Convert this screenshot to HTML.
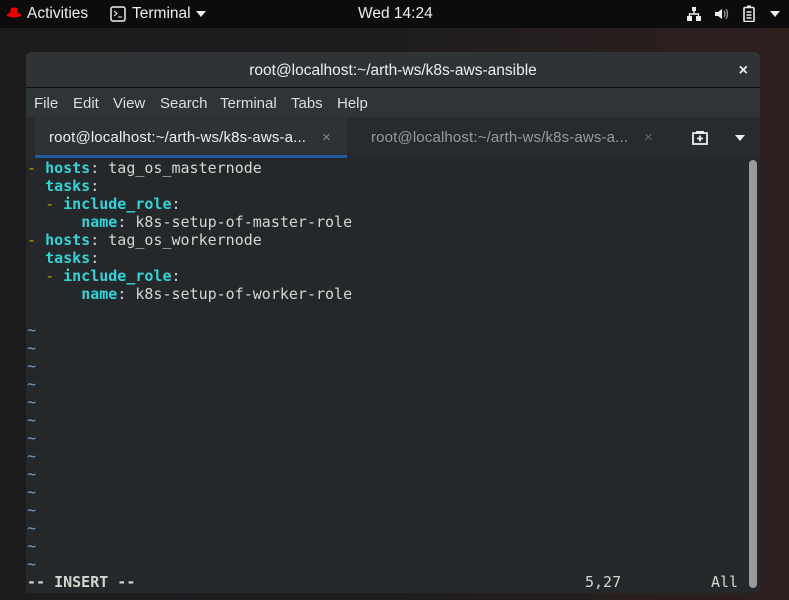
<!DOCTYPE html>
<html><head><meta charset="utf-8"><style>
*{margin:0;padding:0;box-sizing:border-box}
html,body{width:789px;height:600px;overflow:hidden}
body{background:linear-gradient(90deg,#1c1c1d 0%,#1e1d1e 50%,#2a1e1e 85%,#2e1f1f 100%);font-family:"Liberation Sans","DejaVu Sans",sans-serif;position:relative}
#top{position:absolute;left:0;top:0;width:789px;height:28px;background:#0c0c0c;color:#eee;font-size:15.5px}
#top span{position:absolute;top:5px}
#win{position:absolute;left:26px;top:52px;width:734px;height:541px;background:#2e3235;border-radius:6px 6px 0 0;overflow:hidden}
#title{height:36px;border-bottom:1px solid #111;text-align:center;color:#eee;font-size:15.5px;line-height:38px;background:#2f3336}
#menu{height:29px;background:#2f3437;color:#ddd;font-size:15px;line-height:31px;position:relative}
#menu span{position:absolute;top:0}
#tabs{height:41px;background:#272b2e;position:relative;font-size:15px;letter-spacing:0.15px}
.tab{position:absolute;top:0;height:41px;line-height:41px;color:#eee}
#term{position:absolute;left:0;top:106px;width:734px;height:435px;background:#24282b;font-family:"DejaVu Sans Mono","Liberation Mono",monospace;font-size:15px;color:#d3d7cf}
.l{position:absolute;left:1px;height:18px;line-height:18px;white-space:pre}
.c{color:#34d3d6;font-weight:bold}.y{color:#c4a000}.t{color:#729fcf}
</style></head><body>
<div id="top">
<svg style="position:absolute;left:6px;top:7px" width="16" height="12" viewBox="0 0 16 12"><path d="M4 6 L5 1 Q8 0 11 1 L12 6 Q16 7 15 9 Q8 12 1 9 Q0 7 4 6Z" fill="#e00"/></svg>
<span style="left:27px">Activities</span>
<svg style="position:absolute;left:110px;top:6px" width="16" height="16"><rect x="1" y="1" width="14" height="14" rx="2" fill="none" stroke="#eee" stroke-width="1.5"/><path d="M4 5l3 2.5-3 2.5M8 11h4" stroke="#eee" fill="none"/></svg>
<span style="left:132px">Terminal</span>
<svg style="position:absolute;left:196px;top:11px" width="10" height="6"><path d="M0 0h10L5 6z" fill="#eee"/></svg>
<span style="left:358px">Wed 14:24</span>
<svg style="position:absolute;left:686px;top:6px" width="16" height="16"><rect x="6" y="1" width="4" height="4" fill="#eee"/><rect x="1" y="10" width="5" height="5" fill="#eee"/><rect x="10" y="10" width="5" height="5" fill="#eee"/><path d="M8 5v3M3.5 10V8h9v2" stroke="#eee" fill="none" stroke-width="1.4"/></svg>
<svg style="position:absolute;left:714px;top:6px" width="16" height="16"><path d="M1 6h3l4-3v10l-4-3H1z" fill="#eee"/><path d="M10 5q2 3 0 6M12 3q3 5 0 10" stroke="#999" fill="none" stroke-width="1.3"/></svg>
<svg style="position:absolute;left:743px;top:5px" width="12" height="17"><rect x="4" y="0.5" width="4" height="2" fill="#eee"/><rect x="1" y="2.5" width="10" height="14" rx="1" fill="none" stroke="#eee" stroke-width="1.6"/><path d="M3.5 7h5M3.5 10h5M3.5 13h5" stroke="#eee" stroke-width="1.5"/></svg>
<svg style="position:absolute;left:770px;top:11px" width="10" height="6"><path d="M0 0h10L5 6z" fill="#eee"/></svg>
</div>
<div id="win">
<div id="title">root@localhost:~/arth-ws/k8s-aws-ansible<span style="position:absolute;right:12px;font-size:16px;font-weight:bold">×</span></div>
<div id="menu"><span style="left:8px">File</span><span style="left:47px">Edit</span><span style="left:87px">View</span><span style="left:134px">Search</span><span style="left:194px">Terminal</span><span style="left:265px">Tabs</span><span style="left:311px">Help</span></div>
<div id="tabs">
<div class="tab" style="left:9px;width:312px;background:#2e3235;border-bottom:3px solid #215d9c"><span style="position:absolute;left:14px">root@localhost:~/arth-ws/k8s-aws-a...</span><span style="position:absolute;left:287px;color:#888">×</span></div>
<div class="tab" style="left:321px;width:320px;color:#999"><span style="position:absolute;left:24px">root@localhost:~/arth-ws/k8s-aws-a...</span><span style="position:absolute;left:297px;color:#666">×</span></div>
<svg style="position:absolute;left:666px;top:13px" width="16" height="15"><rect x="1" y="3" width="14" height="11" fill="none" stroke="#eee" stroke-width="1.8"/><rect x="4" y="1" width="8" height="3" fill="#eee"/><path d="M8 5.5v6M5 8.5h6" stroke="#eee" stroke-width="1.8"/></svg>
<svg style="position:absolute;left:709px;top:18px" width="10" height="6"><path d="M0 0h10L5 6z" fill="#eee"/></svg>
</div>
<div id="term">
<div style="position:absolute;left:723px;top:2px;width:8px;height:428px;background:#9b9b9b;border-radius:4px"></div>
<div class="l" style="top:1px"><span class="y">-</span> <span class="c">hosts</span>: tag_os_masternode</div>
<div class="l" style="top:19px">  <span class="c">tasks</span>:</div>
<div class="l" style="top:37px">  <span class="y">-</span> <span class="c">include_role</span>:</div>
<div class="l" style="top:55px">      <span class="c">name</span>: k8s-setup-of-master-role</div>
<div class="l" style="top:73px"><span class="y">-</span> <span class="c">hosts</span>: tag_os_workernode</div>
<div class="l" style="top:91px">  <span class="c">tasks</span>:</div>
<div class="l" style="top:109px">  <span class="y">-</span> <span class="c">include_role</span>:</div>
<div class="l" style="top:127px">      <span class="c">name</span>: k8s-setup-of-worker-role</div>
<div class="l t" style="top:163px">~<br>~<br>~<br>~<br>~<br>~<br>~<br>~<br>~<br>~<br>~<br>~<br>~<br>~</div>
<div class="l" style="top:415px;font-weight:bold">-- INSERT --</div>
<div class="l" style="top:415px;left:559px">5,27</div>
<div class="l" style="top:415px;left:685px">All</div>
</div>
</div>
</body></html>
